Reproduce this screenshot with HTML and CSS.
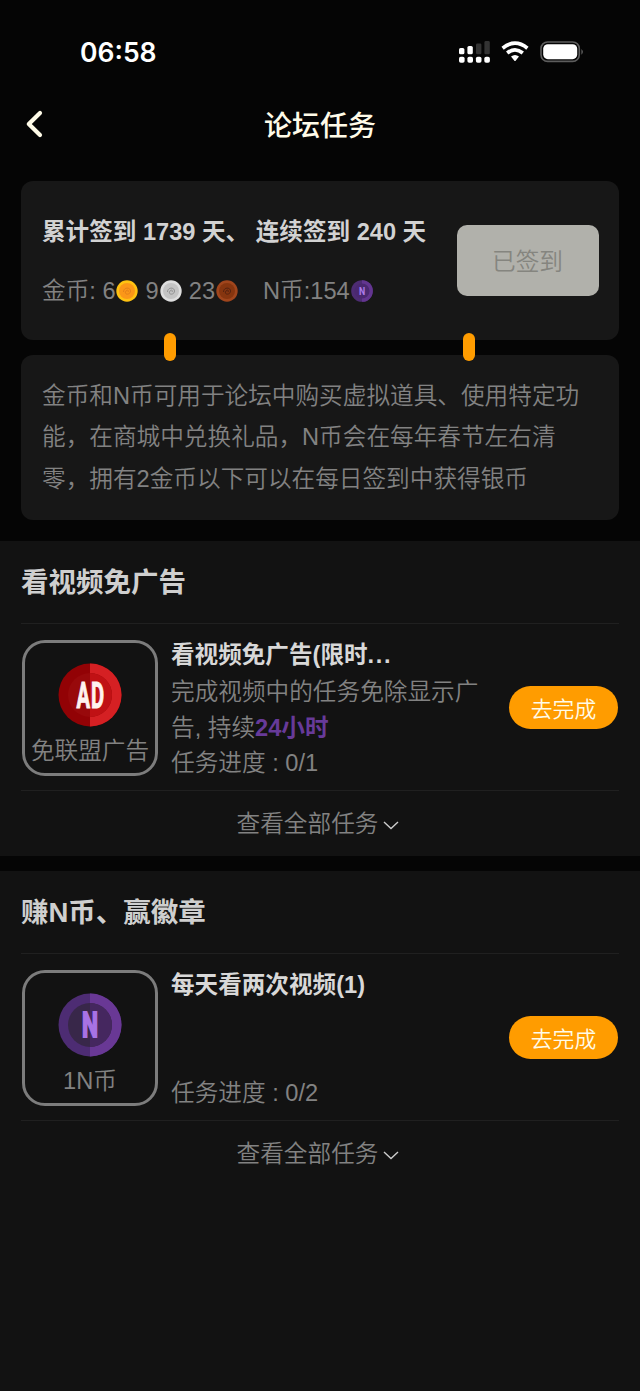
FILE: index.html
```
<!DOCTYPE html>
<html lang="zh-CN">
<head>
<meta charset="utf-8">
<title>论坛任务</title>
<link rel="stylesheet" href="styles.css">
</head>
<body>
<header class="status">
  <span class="clock">06:58</span>
  <svg class="status-icons" width="126" height="24" viewBox="0 0 126 24">
    <g fill="#fff">
      <rect x="1" y="8" width="5.4" height="6.3" rx="1.6"/><rect x="9.4" y="6" width="5.4" height="8.3" rx="1.6"/>
      <rect x="1" y="16.7" width="5.6" height="6" rx="1.8"/><rect x="9.4" y="16.7" width="5.6" height="6" rx="1.8"/>
      <rect x="17.9" y="16.7" width="5.6" height="6" rx="1.8"/><rect x="26.3" y="16.7" width="5.6" height="6" rx="1.8"/>
    </g>
    <g fill="#333"><rect x="18" y="3.4" width="5.4" height="10.9" rx="1.4"/><rect x="26.4" y="1" width="5.4" height="13.3" rx="1.4"/></g>
    <g fill="none" stroke="#fff" stroke-width="3.7"><path d="M44.6 8.2Q57 -1.8 69.4 8.2"/><path d="M49.2 13Q57 6.7 64.8 13"/></g>
    <path d="M53 16.6Q57 13.4 61 16.6L57.8 20.6Q57 21.6 56.2 20.6Z" fill="#fff"/>
    <rect x="83" y="2" width="38.3" height="19.4" rx="6.6" fill="none" stroke="#5d5d5d" stroke-width="1.6"/>
    <rect x="85.2" y="4.2" width="34" height="15" rx="4.6" fill="#fff"/>
    <path d="M123.5 9Q126 11.8 123.5 14.7Z" fill="#777"/>
  </svg>
</header>
<nav class="nav">
  <svg class="back" width="18" height="28" viewBox="0 0 18 28"><path d="M15 3L3.8 14L15 25" fill="none" stroke="#fffbe8" stroke-width="4.2" stroke-linecap="round" stroke-linejoin="round"/></svg>
  <h1 class="title">论坛任务</h1>
</nav>
<main>
  <section class="card summary">
    <div class="totals">
      <p class="days">累计签到 1739 天、 连续签到 240 天</p>
      <p class="coins"><span class="label">金币: 6</span><svg class="coin" viewBox="0 0 22 22"><circle cx="11" cy="11" r="10.7" fill="#ffc211"/><circle cx="11" cy="11" r="8" fill="#fb9718"/><path d="M7.5 12c0-5 7-5 7-1s-6 4-5 1 4-2 2.5 0" fill="none" stroke="#e5811a"/></svg><span class="silver-count">9</span><svg class="coin" viewBox="0 0 22 22"><circle cx="11" cy="11" r="10.7" fill="#dedede"/><circle cx="11" cy="11" r="8" fill="#c4c4c4"/><path d="M7.5 12c0-5 7-5 7-1s-6 4-5 1 4-2 2.5 0" fill="none" stroke="#929292"/></svg><span class="bronze-count">23</span><svg class="coin" viewBox="0 0 22 22"><circle cx="11" cy="11" r="10.7" fill="#a0451c"/><circle cx="11" cy="11" r="8" fill="#86350f"/><path d="M7.5 12c0-5 7-5 7-1s-6 4-5 1 4-2 2.5 0" fill="none" stroke="#54220f"/></svg><span class="n-count">N币:154</span><svg class="coin n-small" viewBox="0 0 64 64"><circle cx="32" cy="32" r="31.5" fill="#4d2c73"/><path d="M32 .5a31.5 31.5 0 0 1 0 63Z" fill="#633590"/><circle cx="32" cy="32" r="22" fill="#4a2870"/><text class="coin-text" x="23" y="44" textLength="18" lengthAdjust="spacingAndGlyphs" font-size="34" fill="#ad7beb">N</text></svg></p>
    </div>
    <button class="signed">已签到</button>
    <i class="link link-left"></i><i class="link link-right"></i>
  </section>
  <section class="card notice">
    金币和N币可用于论坛中购买虚拟道具、使用特定功<br>能，在商城中兑换礼品，N币会在每年春节左右清<br>零，拥有2金币以下可以在每日签到中获得银币
  </section>
  <section class="group">
    <h2 class="heading">看视频免广告</h2>
    <article class="task">
      <div class="reward">
        <svg class="medal" viewBox="0 0 64 64"><circle cx="32" cy="32" r="31.5" fill="#920205"/><path d="M32 .5a31.5 31.5 0 0 1 0 63Z" fill="#d52023"/><circle cx="32" cy="32" r="22" fill="#98090b"/><path d="M32 10a22 22 0 0 1 0 44Z" fill="#c01114"/><text class="coin-text" transform="translate(18.6 44.5) scale(.56 1)" letter-spacing="1.5" font-size="36" fill="#fff3ef" stroke="#fff3ef" stroke-width="1">AD</text></svg>
        <span class="reward-name">免联盟广告</span>
      </div>
      <div class="details">
        <h3 class="name">看视频免广告(限时<span class="dots">...</span></h3>
        <p class="desc">完成视频中的任务免除显示广<br>告, 持续<strong class="accent">24小时</strong></p>
        <p class="progress">任务进度 : 0/1</p>
      </div>
      <button class="go">去完成</button>
    </article>
    <div class="more">查看全部任务<svg class="chevron" width="16" height="9" viewBox="0 0 16 9"><path d="M1 1L8 7.6L15 1" fill="none" stroke="#ccc" stroke-width="1.4"/></svg></div>
  </section>
  <section class="group last">
    <h2 class="heading">赚N币、赢徽章</h2>
    <article class="task">
      <div class="reward">
        <svg class="medal" viewBox="0 0 64 64"><circle cx="32" cy="32" r="31.5" fill="#4d2c73"/><path d="M32 .5a31.5 31.5 0 0 1 0 63Z" fill="#693895"/><circle cx="32" cy="32" r="22" fill="#382749"/><path d="M32 10a22 22 0 0 1 0 44Z" fill="#45275f"/><text class="coin-text" x="24" y="44" textLength="16" lengthAdjust="spacingAndGlyphs" font-size="35" fill="#a873e4" stroke="#a873e4" stroke-width="2">N</text></svg>
        <span class="reward-name">1N币</span>
      </div>
      <div class="details">
        <h3 class="name">每天看两次视频(1)</h3>
        <p class="progress">任务进度 : 0/2</p>
      </div>
      <button class="go">去完成</button>
    </article>
    <div class="more">查看全部任务<svg class="chevron" width="16" height="9" viewBox="0 0 16 9"><path d="M1 1L8 7.6L15 1" fill="none" stroke="#ccc" stroke-width="1.4"/></svg></div>
  </section>
</main>
</body>
</html>
```
FILE: styles.css
```
* { box-sizing: border-box; }
body {
  margin: 0;
  min-height: 1391px;
  display: flex;
  flex-direction: column;
  background: #050505;
  color: #828282;
  font-family: "Liberation Sans", "Noto Sans CJK SC", sans-serif;
  font-size: 23.65px;
  font-weight: 350;
  line-height: 36px;
}
h1, h2, h3, p { margin: 0; }
button { border: 0; padding: 0; font: inherit; }
main { flex: 1; display: flex; flex-direction: column; }
.status { height: 88px; padding: 16px 56px 0 80px; display: flex; align-items: center; justify-content: space-between; }
.clock { color: #fff; font: 600 26.5px/32px Inter, sans-serif; }
.nav { height: 93px; display: grid; grid-template-columns: 100px 1fr 100px; align-items: start; }
.back { margin: 22px 0 0 25px; }
.title { margin-top: 21px; text-align: center; color: #fffbe8; font-size: 28px; font-weight: 500; line-height: 36px; }
.card { margin: 0 21px; border-radius: 12px; background: #171717; }
.summary { position: relative; height: 159px; padding: 33px 20px 0 21px; display: flex; justify-content: space-between; align-items: flex-start; }
.days { color: #d2d2d2; font-size: 23.6px; font-weight: 600; white-space: nowrap; }
.coins { margin-top: 23px; display: flex; align-items: center; white-space: nowrap; }
.coin { width: 22px; height: 22px; }
.silver-count { margin: 0 1px 0 8px; }
.bronze-count { margin: 0 1px 0 7px; }
.n-count { margin: 0 1px 0 25px; }
.signed { width: 142px; height: 71px; margin-top: 11px; padding: 2px 1px 0 0; border-radius: 10px; background: #b1b1ab; color: #85857f; }
.link { position: absolute; top: 152px; width: 12px; height: 28px; border-radius: 6px; background: #ff9c00; z-index: 1; }
.link-left { left: 143px; }
.link-right { left: 442px; }
.notice { height: 165px; margin-top: 15px; padding: 21px 21px 20px; line-height: 41.3px; white-space: nowrap; }
.group { height: 315px; margin-top: 21px; padding: 0 21px; background: #121212; }
.last { flex: 1; margin-top: 15px; }
.heading { height: 83px; padding-top: 24px; border-bottom: 1px solid #202020; color: #cfcfcf; font-size: 27.5px; font-weight: 600; line-height: 36px; }
.task { height: 167px; padding: 16px 1px 0; display: flex; border-bottom: 1px solid #202020; }
.reward { width: 136px; height: 136px; padding-top: 19px; display: flex; flex-direction: column; align-items: center; border: 3px solid #7c7c7c; border-radius: 23px; }
.medal { width: 64px; height: 64px; margin: 1px 1px 0 0; overflow: visible; }
.reward-name { margin-top: 6px; line-height: 36px; white-space: nowrap; }
.coin-text { font-family: Roboto, sans-serif; font-weight: 700; }
.details { width: 320px; height: 136px; padding-left: 13px; display: flex; flex-direction: column; white-space: nowrap; }
.name { margin-top: -3px; color: #d8d8d8; font-size: 23.6px; font-weight: 600; line-height: 36px; }
.dots { letter-spacing: 1.7px; }
.desc { margin: 1px 0 -1px; }
.accent { color: #673a99; font-weight: 600; }
.progress { margin-top: auto; margin-bottom: -4px; line-height: 34px; }
.go { width: 109px; height: 43px; margin: 46px 0 0 auto; padding-top: 4px; border-radius: 22px; background: #ff9c00; color: #fffbe8; font-size: 21.8px; }
.more { height: 64px; padding: 2px 4px 0 0; display: flex; align-items: center; justify-content: center; gap: 5px; }
.chevron { margin-top: 3px; }
```
